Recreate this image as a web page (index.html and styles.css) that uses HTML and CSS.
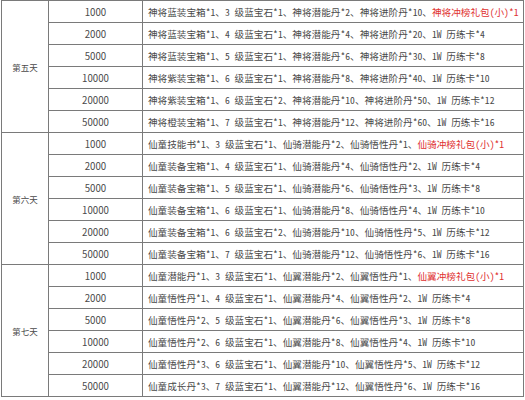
FILE: index.html
```html
<!DOCTYPE html>
<html lang="zh-CN">
<head>
<meta charset="utf-8">
<title>冲榜奖励</title>
<link rel="stylesheet" href="styles.css">
</head>
<body>
<table class="rewards">
  <colgroup>
    <col class="c-day">
    <col class="c-amt">
    <col class="c-item">
  </colgroup>
  <tbody>
    <tr><td class="day" rowspan="6">第五天</td><td class="amt">1000</td><td class="item">神将蓝装宝箱*1、3 级蓝宝石*1、神将潜能丹*2、神将进阶丹*10、<span class="hl">神将冲榜礼包(小)*1</span></td></tr>
    <tr><td class="amt">2000</td><td class="item">神将蓝装宝箱*1、4 级蓝宝石*1、神将潜能丹*4、神将进阶丹*20、1W 历练卡*4</td></tr>
    <tr><td class="amt">5000</td><td class="item">神将蓝装宝箱*1、5 级蓝宝石*1、神将潜能丹*6、神将进阶丹*30、1W 历练卡*8</td></tr>
    <tr><td class="amt">10000</td><td class="item">神将紫装宝箱*1、6 级蓝宝石*1、神将潜能丹*8、神将进阶丹*40、1W 历练卡*10</td></tr>
    <tr><td class="amt">20000</td><td class="item">神将紫装宝箱*1、6 级蓝宝石*2、神将潜能丹*10、神将进阶丹*50、1W 历练卡*12</td></tr>
    <tr><td class="amt">50000</td><td class="item">神将橙装宝箱*1、7 级蓝宝石*1、神将潜能丹*12、神将进阶丹*60、1W 历练卡*16</td></tr>

    <tr><td class="day" rowspan="6">第六天</td><td class="amt">1000</td><td class="item">仙童技能书*1、3 级蓝宝石*1、仙骑潜能丹*2、仙骑悟性丹*1、<span class="hl">仙骑冲榜礼包(小)*1</span></td></tr>
    <tr><td class="amt">2000</td><td class="item">仙童装备宝箱*1、4 级蓝宝石*1、仙骑潜能丹*4、仙骑悟性丹*2、1W 历练卡*4</td></tr>
    <tr><td class="amt">5000</td><td class="item">仙童装备宝箱*1、5 级蓝宝石*1、仙骑潜能丹*6、仙骑悟性丹*3、1W 历练卡*8</td></tr>
    <tr><td class="amt">10000</td><td class="item">仙童装备宝箱*1、6 级蓝宝石*1、仙骑潜能丹*8、仙骑悟性丹*4、1W 历练卡*10</td></tr>
    <tr><td class="amt">20000</td><td class="item">仙童装备宝箱*1、6 级蓝宝石*2、仙骑潜能丹*10、仙骑悟性丹*5、1W 历练卡*12</td></tr>
    <tr><td class="amt">50000</td><td class="item">仙童装备宝箱*1、7 级蓝宝石*1、仙骑潜能丹*12、仙骑悟性丹*6、1W 历练卡*16</td></tr>

    <tr><td class="day" rowspan="6">第七天</td><td class="amt">1000</td><td class="item">仙童潜能丹*1、3 级蓝宝石*1、仙翼潜能丹*2、仙翼悟性丹*1、<span class="hl">仙翼冲榜礼包(小)*1</span></td></tr>
    <tr><td class="amt">2000</td><td class="item">仙童悟性丹*1、4 级蓝宝石*1、仙翼潜能丹*4、仙翼悟性丹*2、1W 历练卡*4</td></tr>
    <tr><td class="amt">5000</td><td class="item">仙童悟性丹*2、5 级蓝宝石*1、仙翼潜能丹*6、仙翼悟性丹*3、1W 历练卡*8</td></tr>
    <tr><td class="amt">10000</td><td class="item">仙童悟性丹*2、6 级蓝宝石*1、仙翼潜能丹*8、仙翼悟性丹*4、1W 历练卡*10</td></tr>
    <tr><td class="amt">20000</td><td class="item">仙童悟性丹*3、6 级蓝宝石*1、仙翼潜能丹*10、仙翼悟性丹*5、1W 历练卡*12</td></tr>
    <tr><td class="amt">50000</td><td class="item">仙童成长丹*3、7 级蓝宝石*1、仙翼潜能丹*12、仙翼悟性丹*6、1W 历练卡*16</td></tr>
  </tbody>
</table>
</body>
</html>
```

FILE: styles.css
```css
html, body {
  margin: 0;
  padding: 0;
  background: #ffffff;
}

body {
  padding-left: 1px;
  font-family: "Noto Sans CJK SC", "Noto Sans", sans-serif;
  font-size: 9.7px;
  color: #4a4a4a;
}

.rewards {
  border-collapse: collapse;
  table-layout: fixed;
  width: 522px;
}

.c-day { width: 47px; }
.c-amt { width: 94px; }
.c-item { width: 381px; }

.rewards td {
  border: 1px solid #7a7a7a;
  height: 21px;
  padding: 0;
  line-height: 14px;
  white-space: nowrap;
  overflow: hidden;
}

.day {
  text-align: center;
  vertical-align: middle;
  font-size: 8.5px;
}

.amt {
  text-align: center;
}

.rewards td.item {
  padding-left: 5px;
  font-family: "Noto Sans Mono CJK SC", "Noto Sans CJK SC", monospace;
  font-size: 9.65px;
}

.hl {
  color: #e0312f;
}
```
